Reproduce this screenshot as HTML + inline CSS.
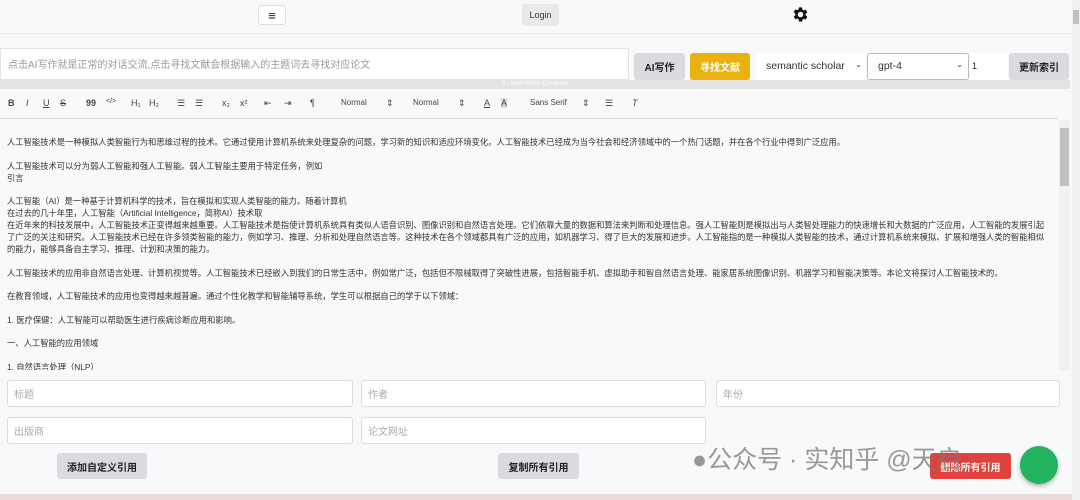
<!DOCTYPE html>
<html><head><meta charset="utf-8"><style>
*{box-sizing:border-box;margin:0;padding:0}
body{width:1080px;height:500px;overflow:hidden;background:#f8f9fa;font-family:"Liberation Sans","Noto Sans CJK SC",sans-serif;position:relative;color:#222}
.abs{position:absolute}
.btn{position:absolute;border-radius:3px;font-size:10px;display:flex;align-items:center;justify-content:center}
.ta{left:0;top:48px;width:629px;height:32px;background:#fff;border:1px solid #e3e3e3;font-size:10px;color:#999;padding:7px 7px}
.tb span{position:absolute;top:98px;font-size:9px;color:#444}
.ed{left:0;top:118px;width:1058px;height:252px;background:#f8f9fa;border-top:1px solid #ddd;font-size:8.3px;color:#333;padding:17px 7px 0;line-height:12px;overflow:hidden}
.ed p{margin:0 0 11.5px}
.in{position:absolute;height:27px;background:#fff;border:1px solid #ddd;border-radius:3px;font-size:10px;color:#aaa;padding:5px 6px}
</style></head><body>
<div class="abs" style="left:0;top:0;width:1072px;height:34px;border-bottom:1px solid #eee"></div>
<div class="btn" style="left:258px;top:5px;width:28px;height:20px;border:1px solid #ddd;background:#fff;font-size:13px;font-weight:bold">≡</div>
<div class="btn" style="left:522px;top:4px;width:37px;height:22px;background:#e8e9eb;color:#333;font-size:9px">Login</div>
<svg class="abs" style="left:791px;top:5px" width="19" height="19" viewBox="0 0 24 24"><path fill="#111" d="M19.4 13a7.5 7.5 0 000-2l2.1-1.6-2-3.5-2.5 1a7 7 0 00-1.7-1L15 3h-4l-.4 2.6a7 7 0 00-1.7 1l-2.5-1-2 3.5L6.6 11a7.5 7.5 0 000 2l-2.1 1.6 2 3.5 2.5-1a7 7 0 001.7 1L11 21h4l.4-2.6a7 7 0 001.7-1l2.5 1 2-3.5zM13 15.5a3.5 3.5 0 110-7 3.5 3.5 0 010 7z" transform="translate(-1 0)"/></svg>
<div class="abs ta">点击AI写作就是正常的对话交流,点击寻找文献会根据输入的主题词去寻找对应论文</div>
<div class="btn" style="left:634px;top:53px;width:51px;height:27px;background:#d9dbde;font-weight:bold;color:#222">AI写作</div>
<div class="btn" style="left:690px;top:53px;width:60px;height:27px;background:#e9b20e;color:#fff;font-weight:bold">寻找文献</div>
<div class="abs" style="left:756px;top:53px;width:110px;height:27px;background:#fff;font-size:10.5px;padding:7px 10px;color:#333">semantic scholar <span style="position:absolute;right:4px;font-size:8px">⌄</span></div>
<div class="abs" style="left:867px;top:53px;width:102px;height:27px;background:#fff;border:1px solid #bbb;border-radius:3px;font-size:10.5px;padding:6px 10px;color:#333">gpt-4<span style="position:absolute;right:5px;font-size:8px">⌄</span></div>
<div class="abs" style="left:970px;top:53px;width:38px;height:27px;background:#fff;font-size:9px;padding:8px 2px">1</div>
<div class="btn" style="left:1009px;top:53px;width:60px;height:27px;background:#d9dbde;font-weight:bold;color:#222">更新索引</div>
<div class="abs" style="left:0;top:80px;width:1070px;height:9px;background:#e2e3e5;font-size:6px;color:#fff;text-align:center;line-height:9px">0 / Itasit-000% Complete</div>
<div class="tb">
<span style="left:8px;font-weight:bold">B</span><span style="left:26px;font-style:italic">I</span><span style="left:43px;text-decoration:underline">U</span><span style="left:60px;text-decoration:line-through">S</span>
<span style="left:86px;font-weight:bold">99</span><span style="left:106px;font-size:7px">&lt;/&gt;</span>
<span style="left:131px">H₁</span><span style="left:149px">H₂</span><span style="left:177px">☰</span><span style="left:195px">☰</span>
<span style="left:222px">x₂</span><span style="left:240px">x²</span><span style="left:264px">⇤</span><span style="left:284px">⇥</span><span style="left:310px">¶</span>
<span style="left:341px;font-size:8px">Normal</span><span style="left:386px">⇕</span><span style="left:413px;font-size:8px">Normal</span><span style="left:458px">⇕</span>
<span style="left:484px;text-decoration:underline">A</span><span style="left:501px;background:#ddd">A</span>
<span style="left:530px;font-size:8px">Sans Serif</span><span style="left:582px">⇕</span><span style="left:605px">☰</span><span style="left:632px;font-style:italic">T</span>
</div>
<div class="abs ed">
<p>人工智能技术是一种模拟人类智能行为和思维过程的技术。它通过使用计算机系统来处理复杂的问题，学习新的知识和适应环境变化。人工智能技术已经成为当今社会和经济领域中的一个热门话题，并在各个行业中得到广泛应用。</p>
<p>人工智能技术可以分为弱人工智能和强人工智能。弱人工智能主要用于特定任务，例如<br>引言</p>
<p>人工智能（AI）是一种基于计算机科学的技术，旨在模拟和实现人类智能的能力。随着计算机<br>在过去的几十年里，人工智能（Artificial Intelligence，简称AI）技术取<br>在近年来的科技发展中，人工智能技术正变得越来越重要。人工智能技术是指使计算机系统具有类似人语音识别、图像识别和自然语言处理。它们依靠大量的数据和算法来判断和处理信息。强人工智能则是模拟出与人类智处理能力的快速增长和大数据的广泛应用，人工智能的发展引起了广泛的关注和研究。人工智能技术已经在许多领类智能的能力，例如学习、推理、分析和处理自然语言等。这种技术在各个领域都具有广泛的应用，如机器学习、得了巨大的发展和进步。人工智能指的是一种模拟人类智能的技术，通过计算机系统来模拟、扩展和增强人类的智能相似的能力，能够具备自主学习、推理、计划和决策的能力。</p>
<p>人工智能技术的应用非自然语言处理、计算机视觉等。人工智能技术已经嵌入到我们的日常生活中，例如常广泛，包括但不限械取得了突破性进展，包括智能手机、虚拟助手和智自然语言处理、能家居系统图像识别、机器学习和智能决策等。本论文将探讨人工智能技术的。</p>
<p>在教育领域，人工智能技术的应用也变得越来越普遍。通过个性化教学和智能辅导系统，学生可以根据自己的学于以下领域：</p>
<p>1. 医疗保健：人工智能可以帮助医生进行疾病诊断应用和影响。</p>
<p>一、人工智能的应用领域</p>
<p>1. 自然语言处理（NLP）</p>
</div>
<div class="abs" style="left:1059px;top:120px;width:11px;height:250px;background:#f1f1f1"></div>
<div class="abs" style="left:1060px;top:128px;width:9px;height:58px;background:#c1c1c1"></div>
<div class="abs" style="left:1072px;top:0;width:8px;height:500px;background:#f1f1f1"></div>
<div class="abs" style="left:1073px;top:10px;width:6px;height:14px;background:#c1c1c1"></div>
<div class="in" style="left:7px;top:380px;width:346px">标题</div>
<div class="in" style="left:361px;top:380px;width:345px">作者</div>
<div class="in" style="left:716px;top:380px;width:344px">年份</div>
<div class="in" style="left:7px;top:417px;width:346px">出版商</div>
<div class="in" style="left:361px;top:417px;width:345px">论文网址</div>
<div class="btn" style="left:57px;top:453px;width:90px;height:26px;background:#d9dbde;font-weight:bold">添加自定义引用</div>
<div class="btn" style="left:498px;top:453px;width:81px;height:26px;background:#d9dbde;font-weight:bold">复制所有引用</div>
<div class="btn" style="left:930px;top:453px;width:81px;height:26px;background:#e0413c;color:#fff;font-weight:bold">删除所有引用</div>
<div class="abs" style="left:1020px;top:446px;width:38px;height:38px;border-radius:50%;background:#22b35e;box-shadow:0 2px 4px rgba(0,0,0,.3)"></div>
<div class="abs" style="left:692px;top:440px;font-size:25px;color:rgba(120,120,120,.75);white-space:nowrap">●公众号 · 实知乎 @天启</div>
<div class="abs" style="left:0;top:494px;width:1072px;height:6px;background:#e8ddd6"></div>
</body></html>
